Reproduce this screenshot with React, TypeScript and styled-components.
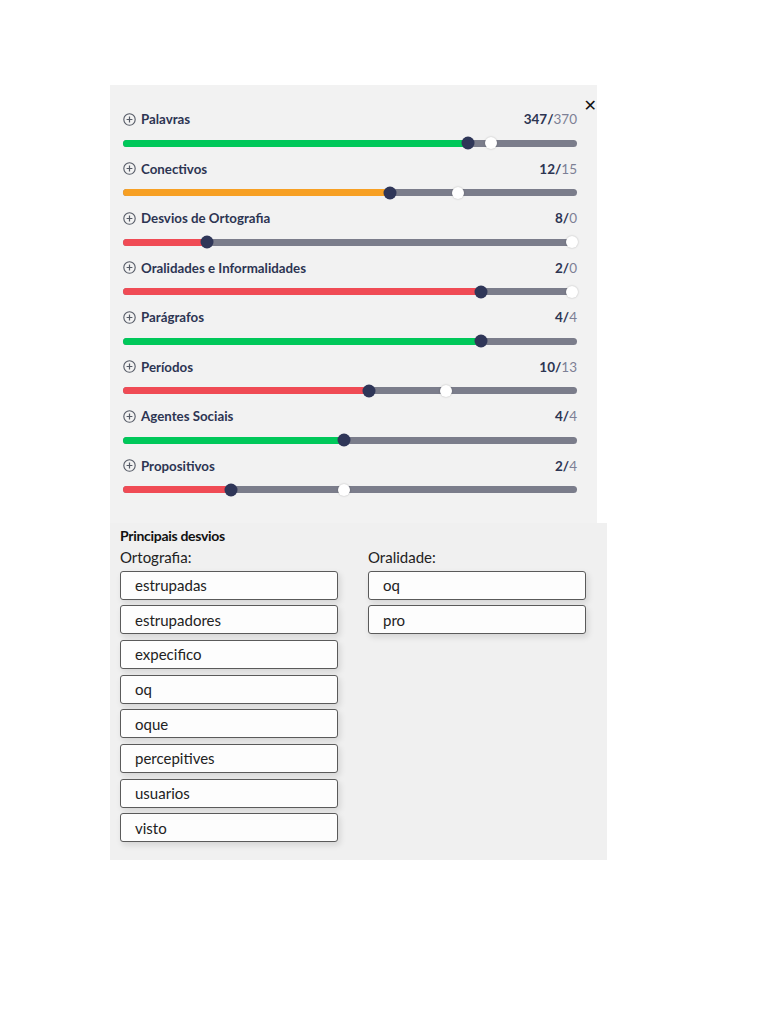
import React from "react";
import styled, {createGlobalStyle} from "styled-components";

const GlobalStyle = createGlobalStyle`
	body {
		margin: 0;
		background: #ffffff;
		font-family: Lato, "Noto Sans", sans-serif;
	}
`;

const Page = styled.div`
	padding: 85px 0 0 110px;
`;

const MetricsPanel = styled.div`
	position: relative;
	width: 487px;
	box-sizing: border-box;
	padding: 25px 20px 16.5px 13px;
	background: #f2f2f2;
`;

const CloseButton = styled.span`
	position: absolute;
	top: 12px;
	right: 0;
	font-size: 16px;
	line-height: 18px;
	color: #111;
	font-family: "DejaVu Sans", sans-serif;
`;

const MetricRow = styled.div`
	margin-bottom: 9.5px;
`;

const MetricHeader = styled.div`
	display: flex;
	align-items: center;
	justify-content: space-between;
	height: 18px;
	margin-bottom: 8px;
`;

const MetricName = styled.div`
	display: flex;
	align-items: center;
	gap: 5px;
	font-size: 13.3px;
	font-weight: 700;
	color: #2d3552;
`;

const MetricValue = styled.div`
	font-size: 13.5px;
	font-weight: 700;
	color: #2d3552;
`;

const MetricTarget = styled.span`
	font-weight: 400;
	color: #7d8095;
`;

const Track = styled.div`
	height: 14px;
	display: flex;
	align-items: center;
`;

const TrackLine = styled.div`
	position: relative;
	width: 100%;
	height: 7px;
	border-radius: 4px;
	background: #7b7d8b;
`;

const Fill = styled.div<{$color: string}>`
	position: absolute;
	left: 0;
	top: 0;
	bottom: 0;
	border-radius: 4px;
	background: ${p => p.$color};
`;

const Thumb = styled.div<{$target?: boolean}>`
	position: absolute;
	top: 50%;
	width: ${p => p.$target ? 12 : 13}px;
	height: ${p => p.$target ? 12 : 13}px;
	border-radius: 50%;
	transform: translate(-50%, -50%);
	background: ${p => p.$target ? "#ffffff" : "#2f3658"};
	box-shadow: ${p => p.$target ? "0 0 2px rgba(0,0,0,0.25)" : "none"};
`;

const DeviationsPanel = styled.div`
	width: 497px;
	box-sizing: border-box;
	padding: 4px 10px 18px 10px;
	background: #f0f0f0;
`;

const PanelTitle = styled.div`
	font-size: 14px;
	font-weight: 700;
	line-height: 18px;
	letter-spacing: -0.3px;
	color: #111;
`;

const Columns = styled.div`
	display: grid;
	grid-template-columns: 218px 218px;
	column-gap: 30px;
	margin-top: 3px;
`;

const Column = styled.div`
	display: flex;
	flex-direction: column;
	gap: 5.7px;
`;

const ColumnTitle = styled.div`
	font-size: 15px;
	line-height: 18px;
	color: #222;
	margin-bottom: -0.7px;
`;

const WordBox = styled.div`
	height: 29px;
	box-sizing: border-box;
	border: 1px solid #5a5a5a;
	border-radius: 3px;
	background: #fdfdfd;
	padding-left: 14px;
	display: flex;
	align-items: center;
	font-size: 15px;
	color: #222;
	box-shadow: 2px 3px 6px rgba(0, 0, 0, 0.12);
`;

const PlusIcon = () => (
	<svg width="13" height="13" viewBox="0 0 13 13">
		<circle cx="6.5" cy="6.5" r="5.7" fill="none" stroke="#555a66" strokeWidth="1.1"/>
		<path d="M6.5 3.6v5.8M3.6 6.5h5.8" stroke="#555a66" strokeWidth="1.2"/>
	</svg>
);

type Metric = {
	name: string;
	value: number;
	target: number;
	color: string;
	thumb: number;
	marker?: number;
};

const metrics: Metric[] = [
	{name: "Palavras", value: 347, target: 370, color: "#00c85a", thumb: 345, marker: 368},
	{name: "Conectivos", value: 12, target: 15, color: "#f7a024", thumb: 267, marker: 335},
	{name: "Desvios de Ortografia", value: 8, target: 0, color: "#f04b55", thumb: 84, marker: 449},
	{name: "Oralidades e Informalidades", value: 2, target: 0, color: "#f04b55", thumb: 358, marker: 449},
	{name: "Parágrafos", value: 4, target: 4, color: "#00c85a", thumb: 358},
	{name: "Períodos", value: 10, target: 13, color: "#f04b55", thumb: 246, marker: 323},
	{name: "Agentes Sociais", value: 4, target: 4, color: "#00c85a", thumb: 221},
	{name: "Propositivos", value: 2, target: 4, color: "#f04b55", thumb: 108, marker: 221},
];

const ortografia = ["estrupadas", "estrupadores", "expecifico", "oq", "oque", "percepitives", "usuarios", "visto"];
const oralidade = ["oq", "pro"];

export default function App() {
	return (
		<Page>
			<GlobalStyle/>
			<MetricsPanel>
				<CloseButton>✕</CloseButton>
				{metrics.map(m => (
					<MetricRow key={m.name}>
						<MetricHeader>
							<MetricName><PlusIcon/>{m.name}</MetricName>
							<MetricValue>{m.value}/<MetricTarget>{m.target}</MetricTarget></MetricValue>
						</MetricHeader>
						<Track>
							<TrackLine>
								<Fill $color={m.color} style={{width: m.thumb}}/>
								{m.marker !== undefined && <Thumb $target style={{left: m.marker}}/>}
								<Thumb style={{left: m.thumb}}/>
							</TrackLine>
						</Track>
					</MetricRow>
				))}
			</MetricsPanel>
			<DeviationsPanel>
				<PanelTitle>Principais desvios</PanelTitle>
				<Columns>
					<Column>
						<ColumnTitle>Ortografia:</ColumnTitle>
						{ortografia.map(w => <WordBox key={w}>{w}</WordBox>)}
					</Column>
					<Column>
						<ColumnTitle>Oralidade:</ColumnTitle>
						{oralidade.map(w => <WordBox key={w}>{w}</WordBox>)}
					</Column>
				</Columns>
			</DeviationsPanel>
		</Page>
	);
}
